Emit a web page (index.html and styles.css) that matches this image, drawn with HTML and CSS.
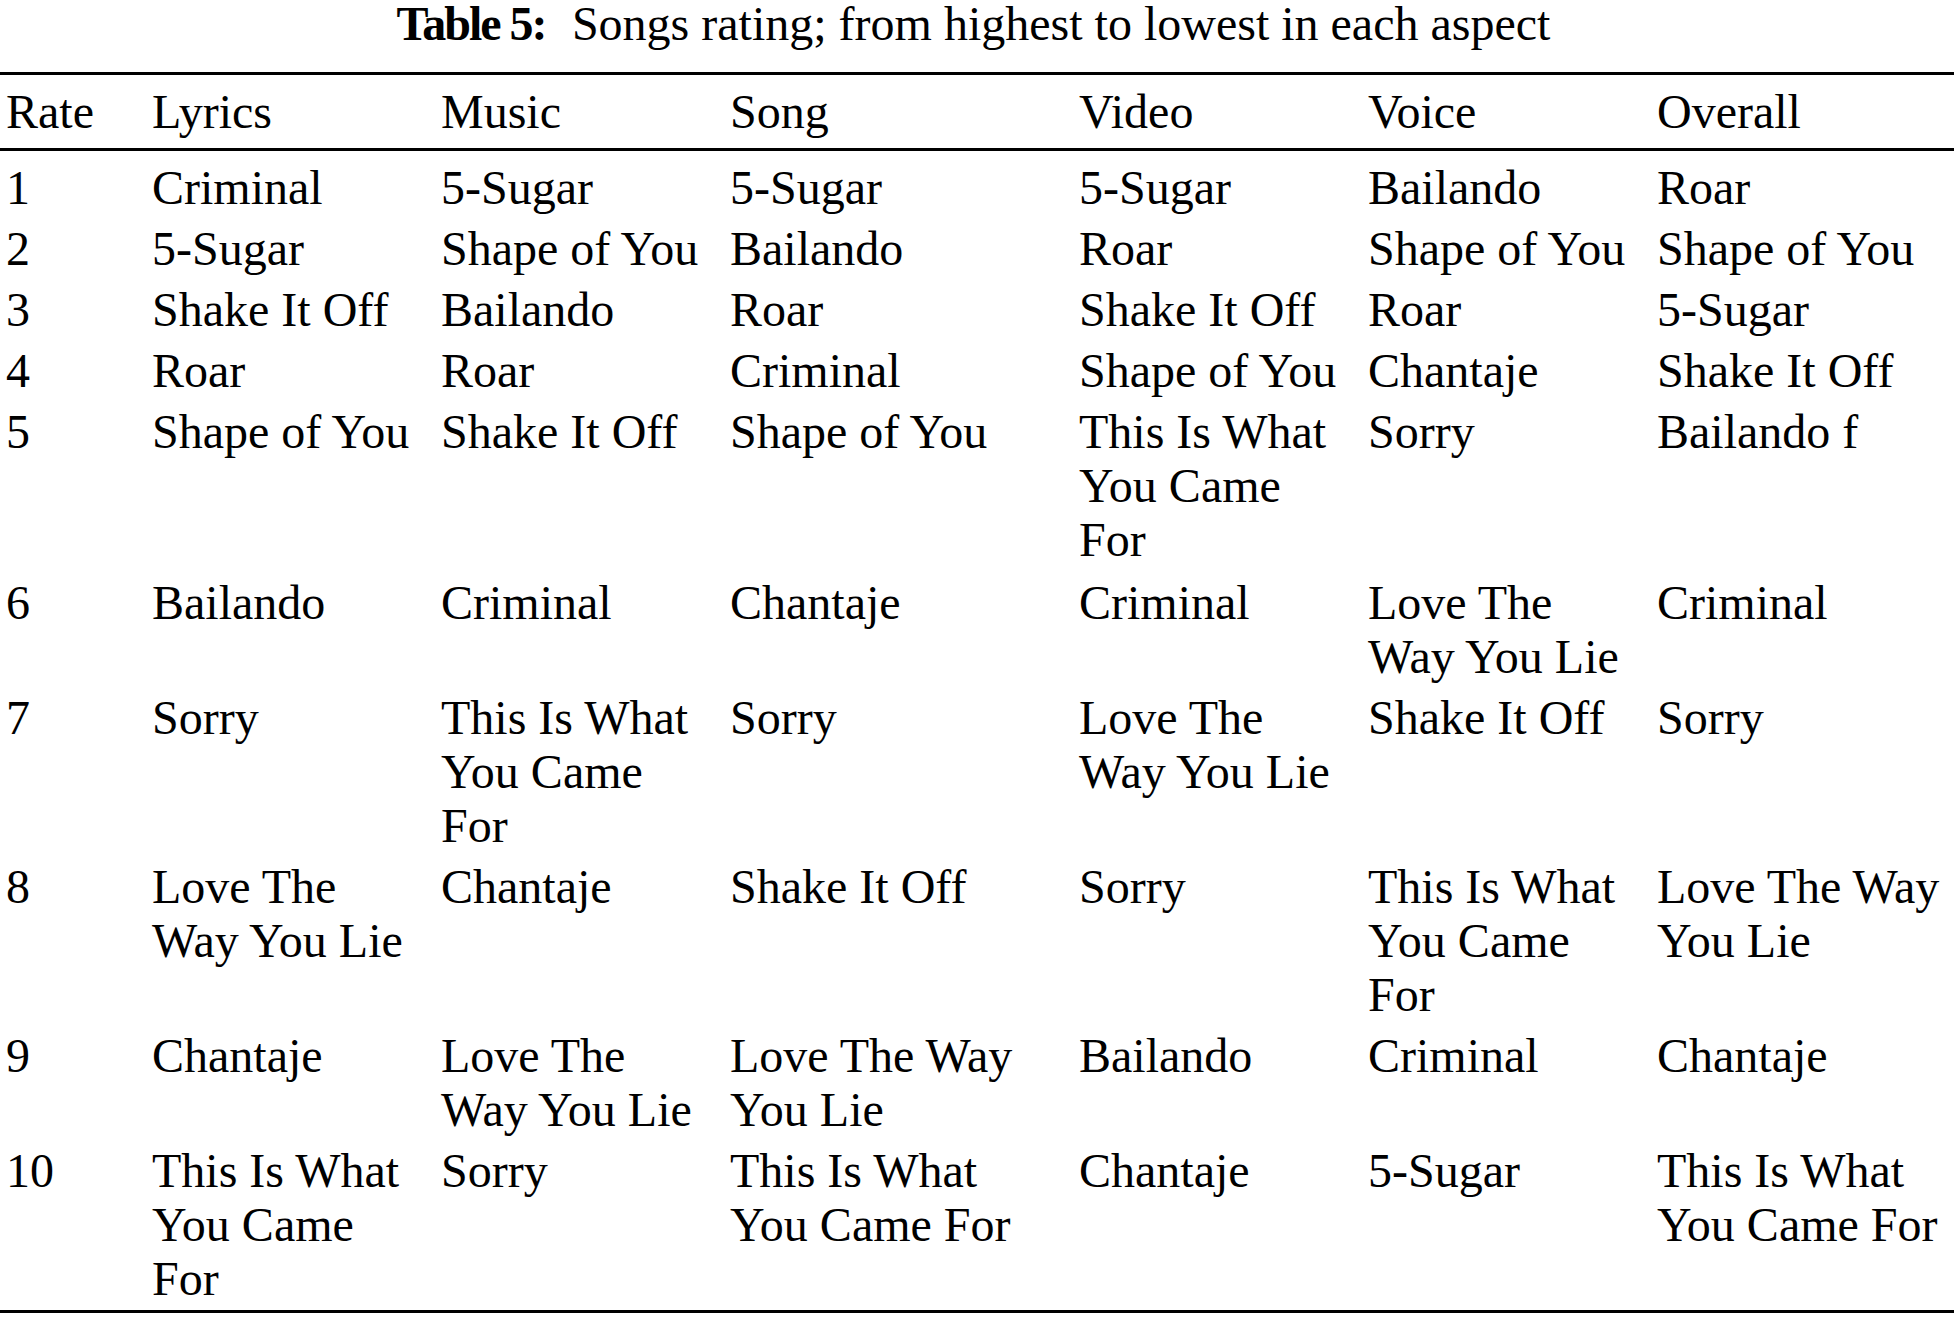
FILE: index.html
```html
<!DOCTYPE html>
<html lang="en">
<head>
<meta charset="utf-8">
<title>Table 5: Songs rating</title>
<link rel="stylesheet" href="styles.css">
</head>
<body>
<div class="caption"><b class="label">Table 5:</b> Songs rating; from highest to lowest in each aspect</div>
<table class="ratings">
  <colgroup>
    <col class="c-rate">
    <col class="c-std">
    <col class="c-std">
    <col class="c-wide">
    <col class="c-std">
    <col class="c-std">
    <col class="c-last">
  </colgroup>
  <thead>
    <tr><th>Rate</th><th>Lyrics</th><th>Music</th><th class="wide">Song</th><th>Video</th><th>Voice</th><th class="last">Overall</th></tr>
  </thead>
  <tbody>
    <tr><td>1</td><td>Criminal</td><td>5-Sugar</td><td class="wide">5-Sugar</td><td>5-Sugar</td><td>Bailando</td><td class="last">Roar</td></tr>
    <tr><td>2</td><td>5-Sugar</td><td>Shape of You</td><td class="wide">Bailando</td><td>Roar</td><td>Shape of You</td><td class="last">Shape of You</td></tr>
    <tr><td>3</td><td>Shake It Off</td><td>Bailando</td><td class="wide">Roar</td><td>Shake It Off</td><td>Roar</td><td class="last">5-Sugar</td></tr>
    <tr><td>4</td><td>Roar</td><td>Roar</td><td class="wide">Criminal</td><td>Shape of You</td><td>Chantaje</td><td class="last">Shake It Off</td></tr>
    <tr class="row-tall"><td>5</td><td>Shape of You</td><td>Shake It Off</td><td class="wide">Shape of You</td><td>This Is What You Came For</td><td>Sorry</td><td class="last">Bailando f</td></tr>
    <tr><td>6</td><td>Bailando</td><td>Criminal</td><td class="wide">Chantaje</td><td>Criminal</td><td>Love The Way You Lie</td><td class="last">Criminal</td></tr>
    <tr><td>7</td><td>Sorry</td><td>This Is What You Came For</td><td class="wide">Sorry</td><td>Love The Way You Lie</td><td>Shake It Off</td><td class="last">Sorry</td></tr>
    <tr><td>8</td><td>Love The Way You Lie</td><td>Chantaje</td><td class="wide">Shake It Off</td><td>Sorry</td><td>This Is What You Came For</td><td class="last">Love The Way You Lie</td></tr>
    <tr><td>9</td><td>Chantaje</td><td>Love The Way You Lie</td><td class="wide">Love The Way You Lie</td><td>Bailando</td><td>Criminal</td><td class="last">Chantaje</td></tr>
    <tr><td>10</td><td>This Is What You Came For</td><td>Sorry</td><td class="wide">This Is What You Came For</td><td>Chantaje</td><td>5-Sugar</td><td class="last">This Is What You Came For</td></tr>
  </tbody>
</table>
</body>
</html>
```
FILE: styles.css
```css
html, body {
  margin: 0;
  padding: 0;
  background: #fff;
  overflow: hidden;
}
body {
  font-family: "Liberation Serif", "Times New Roman", serif;
  font-size: 48px;
  color: #000;
}
.caption {
  text-align: center;
  line-height: 48px;
  height: 48px;
  margin-bottom: 24px;
  padding-right: 7px;
  white-space: nowrap;
}
.caption .label {
  font-weight: bold;
  letter-spacing: -2px;
  margin-right: 0.3em;
}
.ratings {
  width: 1954px;
  table-layout: fixed;
  border-collapse: separate;
  border-spacing: 0;
}
.c-rate { width: 146px; }
.c-std { width: 289px; }
.c-wide { width: 349px; }
.c-last { width: 303px; }
.ratings th,
.ratings td {
  text-align: left;
  vertical-align: top;
  font-weight: normal;
  line-height: 54px;
  padding: 7px 16px 0 6px;
}
.ratings th.wide,
.ratings td.wide {
  padding-right: 30px;
}
.ratings th.last,
.ratings td.last {
  padding-right: 0;
}
.ratings thead th {
  border-top: 3px solid #000;
  border-bottom: 3px solid #000;
  padding-top: 10px;
  padding-bottom: 9px;
}
.ratings tbody tr:first-child td {
  padding-top: 10px;
}
.ratings tbody tr.row-tall td {
  padding-bottom: 2px;
}
.ratings tbody tr:last-child td {
  padding-bottom: 4px;
  border-bottom: 3px solid #000;
}
```
